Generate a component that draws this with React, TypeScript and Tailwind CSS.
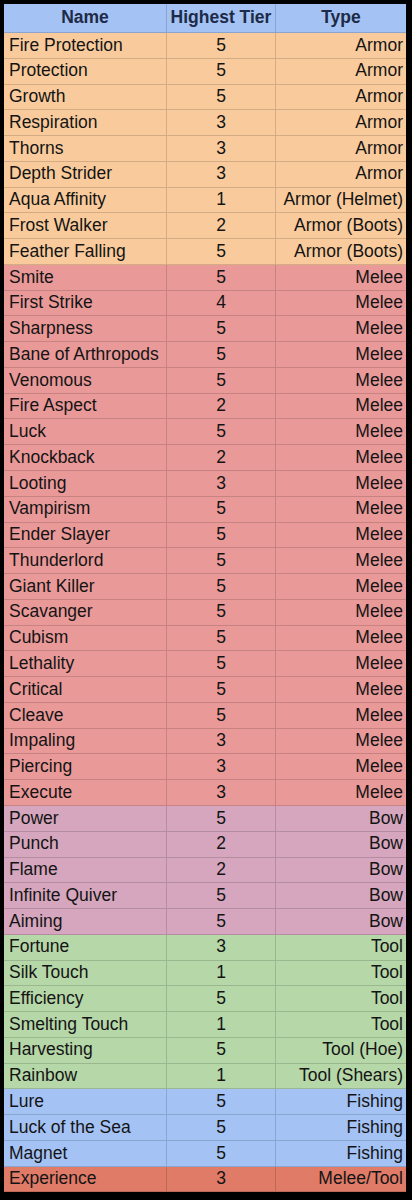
const groups: { color: string; rows: [string, number, string][] }[] = [
  {
    color: "bg-[#f9cb9c]",
    rows: [
      ["Fire Protection", 5, "Armor"],
      ["Protection", 5, "Armor"],
      ["Growth", 5, "Armor"],
      ["Respiration", 3, "Armor"],
      ["Thorns", 3, "Armor"],
      ["Depth Strider", 3, "Armor"],
      ["Aqua Affinity", 1, "Armor (Helmet)"],
      ["Frost Walker", 2, "Armor (Boots)"],
      ["Feather Falling", 5, "Armor (Boots)"],
    ],
  },
  {
    color: "bg-[#ea9999]",
    rows: [
      ["Smite", 5, "Melee"],
      ["First Strike", 4, "Melee"],
      ["Sharpness", 5, "Melee"],
      ["Bane of Arthropods", 5, "Melee"],
      ["Venomous", 5, "Melee"],
      ["Fire Aspect", 2, "Melee"],
      ["Luck", 5, "Melee"],
      ["Knockback", 2, "Melee"],
      ["Looting", 3, "Melee"],
      ["Vampirism", 5, "Melee"],
      ["Ender Slayer", 5, "Melee"],
      ["Thunderlord", 5, "Melee"],
      ["Giant Killer", 5, "Melee"],
      ["Scavanger", 5, "Melee"],
      ["Cubism", 5, "Melee"],
      ["Lethality", 5, "Melee"],
      ["Critical", 5, "Melee"],
      ["Cleave", 5, "Melee"],
      ["Impaling", 3, "Melee"],
      ["Piercing", 3, "Melee"],
      ["Execute", 3, "Melee"],
    ],
  },
  {
    color: "bg-[#d5a6bd]",
    rows: [
      ["Power", 5, "Bow"],
      ["Punch", 2, "Bow"],
      ["Flame", 2, "Bow"],
      ["Infinite Quiver", 5, "Bow"],
      ["Aiming", 5, "Bow"],
    ],
  },
  {
    color: "bg-[#b6d7a8]",
    rows: [
      ["Fortune", 3, "Tool"],
      ["Silk Touch", 1, "Tool"],
      ["Efficiency", 5, "Tool"],
      ["Smelting Touch", 1, "Tool"],
      ["Harvesting", 5, "Tool (Hoe)"],
      ["Rainbow", 1, "Tool (Shears)"],
    ],
  },
  {
    color: "bg-[#a4c2f4]",
    rows: [
      ["Lure", 5, "Fishing"],
      ["Luck of the Sea", 5, "Fishing"],
      ["Magnet", 5, "Fishing"],
    ],
  },
  {
    color: "bg-[#e07b68]",
    rows: [["Experience", 3, "Melee/Tool"]],
  },
];

const cols = "grid grid-cols-[163px_109px_130px]";

export default function App() {
  return (
    <div className="min-h-[1200px] w-[412px] bg-black pb-[7px] pl-[4px] pr-[6px] pt-[4px] font-['Liberation_Sans',Arial,sans-serif] text-[17.5px] leading-none text-[#141414]">
      <div className={`${cols} h-[29px] bg-[#a4c2f4] font-bold text-[#1d2a48]`}>
        <div className="flex items-center justify-center border-r border-b border-black/15">Name</div>
        <div className="flex items-center justify-center border-r border-b border-black/15">Highest Tier</div>
        <div className="flex items-center justify-center border-b border-black/15">Type</div>
      </div>
      {groups.map((g) =>
        g.rows.map(([name, tier, type]) => (
          <div key={name} className={`${cols} h-[25.78px] ${g.color}`}>
            <div className="flex items-center border-r border-b border-black/15 pl-[5px]">{name}</div>
            <div className="flex items-center justify-center border-r border-b border-black/15">{tier}</div>
            <div className="flex items-center justify-end border-b border-black/15 pr-[3px]">{type}</div>
          </div>
        ))
      )}
    </div>
  );
}
